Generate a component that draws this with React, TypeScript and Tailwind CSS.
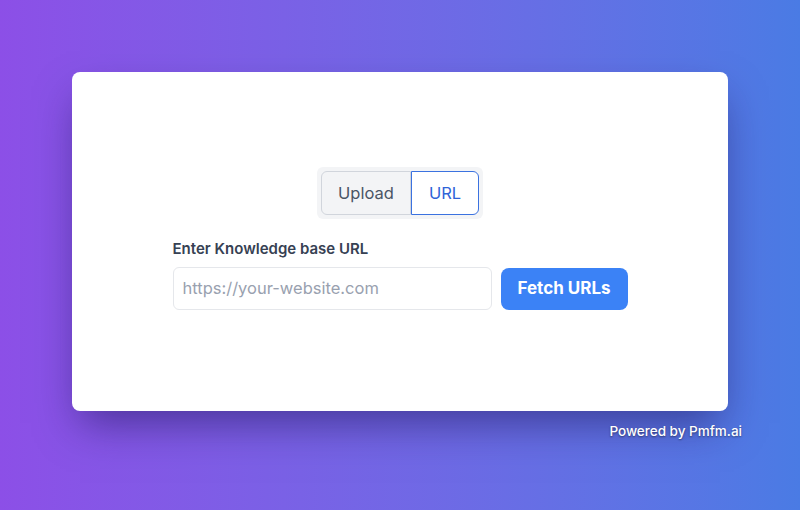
import { useState } from "react";

export default function App() {
  const [mode, setMode] = useState<"upload" | "url">("url");

  return (
    <div className="min-h-[510px] w-full bg-linear-to-r from-[#8c4fe7] to-[#4a7be4] font-['Inter','Liberation_Sans',sans-serif] flex flex-col items-center pt-[72px]">
      <div className="w-[656px] h-[339px] bg-white rounded-lg shadow-[0_20px_40px_-8px_rgba(30,20,90,0.55)] flex flex-col items-center justify-center pb-[6px]">
        <div className="flex bg-gray-100 rounded-md p-1">
          <button
            onClick={() => setMode("upload")}
            className={`w-[90px] h-[44px] rounded-l-md text-[16.5px] border ${
              mode === "upload"
                ? "bg-white border-[#3b72e0] text-[#2f63d8]"
                : "bg-gray-100 border-gray-300 text-gray-600"
            }`}
          >
            Upload
          </button>
          <button
            onClick={() => setMode("url")}
            className={`w-[68px] h-[44px] rounded-r-md text-[16.5px] border ${
              mode === "url"
                ? "bg-white border-[#3b72e0] text-[#2f63d8]"
                : "bg-gray-100 border-gray-300 text-gray-600"
            }`}
          >
            URL
          </button>
        </div>

        <div className="w-[455px] mt-[19px]">
          <label className="block text-[15px] font-semibold text-gray-700 mb-[6px]">
            Enter Knowledge base URL
          </label>
          <div className="flex gap-[9px]">
            <input
              type="text"
              placeholder="https://your-website.com"
              className="w-[319px] h-[43px] px-[9px] border border-gray-200 rounded-md text-[16.5px] text-gray-700 placeholder:text-gray-400 outline-none"
            />
            <button className="w-[127px] h-[42px] bg-[#3b82f6] text-white text-[17px] font-bold rounded-lg mt-px">
              Fetch URLs
            </button>
          </div>
        </div>
      </div>

      <div className="w-[656px] flex justify-end mt-[10px]">
        <span className="text-[13.5px] font-medium text-white mr-[-14px] [text-shadow:0_1px_2px_rgba(0,0,0,0.45)]">
          Powered by Pmfm.ai
        </span>
      </div>
    </div>
  );
}
